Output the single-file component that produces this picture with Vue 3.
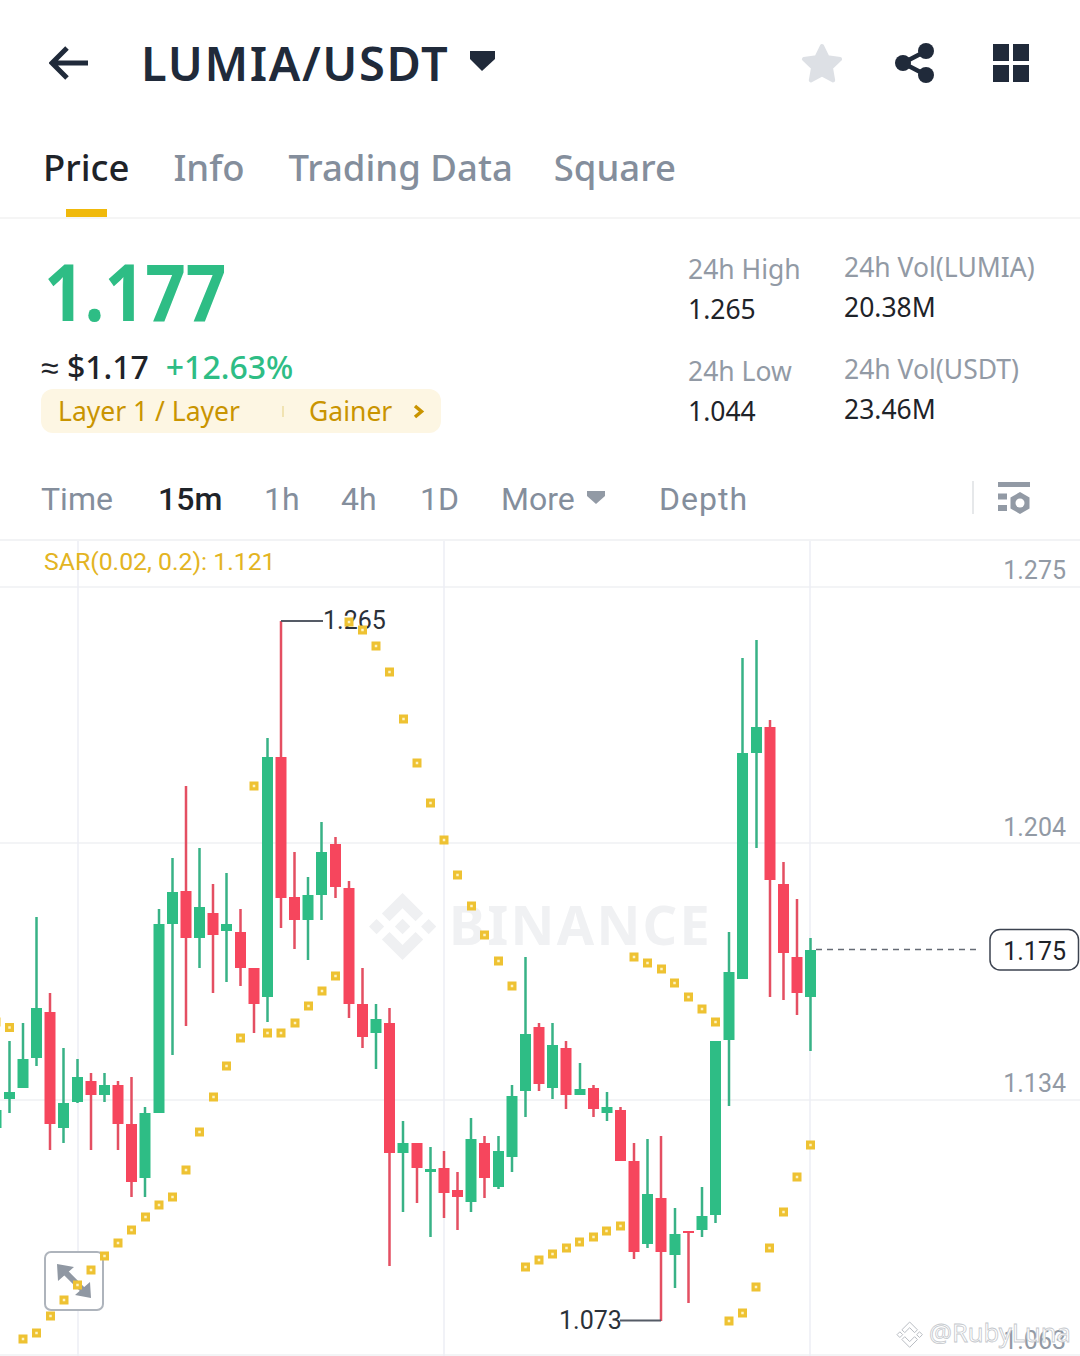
<template>
  <div class="screen">
    <header class="topbar">
      <svg class="back" width="44" height="36" viewBox="0 0 44 36">
        <path d="M18 3 L3 18 L18 33 M3 18 H39" fill="none" stroke="#202a3a" stroke-width="5" />
      </svg>
      <h1 class="pair">LUMIA/USDT</h1>
      <svg class="caret" width="26" height="20" viewBox="0 0 26 20">
        <path d="M1 0 H26 V8 L13 20 L1 8 Z" fill="#202a3a" />
      </svg>
      <svg class="star" width="42" height="42" viewBox="0 0 42 42">
        <polygon :points="starPoints" fill="#dde0e5" stroke="#dde0e5" stroke-width="4" stroke-linejoin="round" />
      </svg>
      <svg class="share" width="40" height="42" viewBox="0 0 40 42">
        <path d="M31 9 L8 21 L31 33" fill="none" stroke="#202a3a" stroke-width="4.5" />
        <circle cx="31" cy="9" r="8" fill="#202a3a" />
        <circle cx="8" cy="21" r="8" fill="#202a3a" />
        <circle cx="31" cy="33" r="8" fill="#202a3a" />
      </svg>
      <svg class="apps" width="37" height="38" viewBox="0 0 37 38">
        <rect x="0" y="0" width="16" height="17" fill="#202a3a" />
        <rect x="20" y="0" width="16" height="17" fill="#202a3a" />
        <rect x="0" y="21" width="16" height="17" fill="#202a3a" />
        <rect x="20" y="21" width="16" height="17" fill="#202a3a" />
      </svg>
    </header>

    <nav class="tabs">
      <span v-for="tab in tabs" :key="tab" :class="['tab', { active: tab === 'Price' }]">{{ tab }}</span>
    </nav>

    <section class="summary">
      <div class="left">
        <div class="last">1.177</div>
        <div class="change">
          <span class="approx">≈ $1.17</span>
          <span class="pct">+12.63%</span>
        </div>
        <div class="pill">
          <span>Layer 1 / Layer</span>
          <i class="pill-sep"></i>
          <span>Gainer</span>
          <svg width="12" height="15" viewBox="0 0 12 15">
            <path d="M2 2 L8.5 7.5 L2 13" fill="none" stroke="#c99400" stroke-width="3.5" />
          </svg>
        </div>
      </div>
      <div class="stats">
        <div class="stat-col first">
          <div class="stat"><label>24h High</label><b>1.265</b></div>
          <div class="stat"><label>24h Low</label><b>1.044</b></div>
        </div>
        <div class="stat-col">
          <div class="stat"><label>24h Vol(LUMIA)</label><b>20.38M</b></div>
          <div class="stat"><label>24h Vol(USDT)</label><b>23.46M</b></div>
        </div>
      </div>
    </section>

    <div class="intervals">
      <span v-for="iv in intervals" :key="iv.name" :class="['iv', { on: iv.name === '15m' }]" :style="{ width: iv.w + 'px' }">{{ iv.name }}</span>
      <svg class="more-caret" width="18" height="13" viewBox="0 0 18 13">
        <path d="M0 0 H18 V5 L9 13 L0 5 Z" fill="#929aa5" />
      </svg>
      <span class="iv depth">Depth</span>
      <i class="iv-sep"></i>
      <svg class="settings" width="32" height="33" viewBox="0 0 32 33">
        <rect x="0" y="1" width="32" height="5" fill="#929aa5" />
        <rect x="0" y="12.5" width="9" height="6" fill="#929aa5" />
        <rect x="0" y="24" width="9" height="6" fill="#929aa5" />
        <polygon points="22,11 31.5,16.5 31.5,27.5 22,33 12.5,27.5 12.5,16.5" fill="#929aa5" />
        <circle cx="22" cy="22" r="4.5" fill="#fff" />
      </svg>
    </div>

    <div class="chart">
      <svg width="1080" height="815" viewBox="0 541 1080 815">
        <line v-for="y in gridY" :key="'h' + y" x1="0" x2="1080" :y1="y" :y2="y" stroke="#eff0f3" stroke-width="1.5" />
        <line v-for="x in gridX" :key="'v' + x" :x1="x" :x2="x" y1="541" y2="1356" stroke="#eceef4" stroke-width="1.5" />

        <path transform="translate(369 893) scale(0.53)" fill="#eff0f2" d="M38.73 53.2l24.59-24.58 24.6 24.6 14.3-14.31L63.32 0 24.43 38.9zM0 63.31l14.3-14.31 14.31 14.31-14.31 14.3zM38.73 73.41l24.59 24.59 24.6-24.6 14.31 14.29-38.9 38.91-38.91-38.88-.02-.02zM98.28 63.31l14.3-14.31 14.31 14.3-14.31 14.32zM77.83 63.3L63.32 48.78 52.59 59.51l-1.24 1.23-2.54 2.54 14.51 14.5 14.51-14.47z" />
        <text class="mark" x="449" y="945">BINANCE</text>

        <text class="sar-label" x="44" y="569.5">SAR(0.02, 0.2): 1.121</text>
        <text v-for="p in axis" :key="p.text" class="axis" x="1066" :y="p.y" text-anchor="end">{{ p.text }}</text>

        <rect x="45" y="1252" width="58" height="58" rx="6" fill="#fff" stroke="#aeb4bc" stroke-width="2" />
        <path d="M57 1264 L74 1267 L58 1281 Z M91 1298 L75 1295 L90 1282 Z" fill="#9098a3" />
        <path d="M64 1271 L84 1291" stroke="#9098a3" stroke-width="6" />

        <g v-for="c in bars" :key="c.x">
          <rect :x="c.x - 1.25" :y="c.high" width="2.5" :height="c.low - c.high" :fill="c.up ? '#38b286' : '#e44f62'" />
          <rect :x="c.x - 5.5" :y="c.top" width="11" :height="c.bottom - c.top" :fill="c.up ? '#2ebd85' : '#f6465d'" />
        </g>

        <path d="M281 621 H323" stroke="#555b66" stroke-width="2" fill="none" />
        <path d="M620 1320.5 H661" stroke="#555b66" stroke-width="2" fill="none" />
        <text class="extreme" x="323" y="629">1.265</text>
        <text class="extreme" x="559" y="1329">1.073</text>

        <g v-for="d in sar" :key="d[0] + '-' + d[1]">
          <rect :x="d[0] - 4.5" :y="d[1] - 4.5" width="9" height="9" fill="#eec232" />
          <rect :x="d[0] - 1.25" :y="d[1] - 1.25" width="2.5" height="2.5" fill="#fdf3c4" />
        </g>

        <line x1="816" x2="976" y1="949.5" y2="949.5" stroke="#666b75" stroke-width="1.5" stroke-dasharray="6 5" />
        <rect x="990" y="929.5" width="88.5" height="40.5" rx="10" fill="#fff" stroke="#3c4350" stroke-width="1.5" />
        <text class="axis dark" x="1066" y="960" text-anchor="end">1.175</text>

        <path transform="translate(897 1322) scale(0.2)" fill="#fff" stroke="#b9bdc3" stroke-width="5" d="M38.73 53.2l24.59-24.58 24.6 24.6 14.3-14.31L63.32 0 24.43 38.9zM0 63.31l14.3-14.31 14.31 14.31-14.31 14.3zM38.73 73.41l24.59 24.59 24.6-24.6 14.31 14.29-38.9 38.91-38.91-38.88-.02-.02zM98.28 63.31l14.3-14.31 14.31 14.3-14.31 14.32z" />
        <text class="credit" x="929" y="1342">@RubyLuna</text>
      </svg>
    </div>
  </div>
</template>

<script setup>
import { computed } from 'vue'

const tabs = ['Price', 'Info', 'Trading Data', 'Square']

const intervals = [
  { name: 'Time', w: 117 },
  { name: '15m', w: 106 },
  { name: '1h', w: 77 },
  { name: '4h', w: 79 },
  { name: '1D', w: 81 },
  { name: 'More', w: 86 }
]

const gridY = [587, 843, 1100, 1355]
const gridX = [78, 444, 810]

const axis = [
  { text: '1.275', y: 579 },
  { text: '1.204', y: 836 },
  { text: '1.134', y: 1092 },
  { text: '1.063', y: 1349 }
]

// [up, high, bodyTop, bodyBottom, low], one entry per candle from the left edge
const candles = [
  [1, 1100, 1110, 1128, 1130],
  [1, 1041, 1092, 1099, 1113],
  [1, 1023, 1059, 1088, 1088],
  [1, 917, 1008, 1058, 1066],
  [0, 993, 1012, 1124, 1150],
  [1, 1048, 1103, 1128, 1143],
  [1, 1059, 1077, 1102, 1103],
  [0, 1073, 1081, 1095, 1150],
  [1, 1073, 1085, 1095, 1102],
  [0, 1081, 1085, 1124, 1150],
  [0, 1077, 1124, 1182, 1197],
  [1, 1107, 1113, 1178, 1197],
  [1, 909, 924, 1113, 1113],
  [1, 858, 892, 924, 1055],
  [0, 786, 891, 938, 1026],
  [1, 848, 907, 938, 968],
  [0, 884, 913, 935, 993],
  [1, 873, 924, 931, 982],
  [0, 909, 932, 968, 986],
  [0, 968, 968, 1004, 1033],
  [1, 738, 757, 997, 1022],
  [0, 621, 757, 898, 928],
  [0, 852, 897, 920, 949],
  [1, 877, 895, 920, 960],
  [1, 822, 852, 895, 920],
  [0, 837, 844, 887, 898],
  [0, 881, 888, 1004, 1018],
  [0, 968, 1004, 1037, 1048],
  [1, 1004, 1019, 1033, 1069],
  [0, 1008, 1023, 1153, 1266],
  [1, 1121, 1143, 1153, 1212],
  [0, 1143, 1143, 1168, 1203],
  [1, 1147, 1169, 1172, 1237],
  [0, 1151, 1168, 1193, 1218],
  [0, 1172, 1190, 1197, 1230],
  [1, 1118, 1139, 1202, 1212],
  [0, 1136, 1143, 1178, 1198],
  [1, 1136, 1151, 1187, 1189],
  [1, 1085, 1096, 1157, 1172],
  [1, 957, 1034, 1091, 1117],
  [0, 1023, 1027, 1084, 1091],
  [1, 1023, 1045, 1088, 1099],
  [0, 1041, 1048, 1095, 1109],
  [1, 1063, 1089, 1095, 1095],
  [0, 1085, 1088, 1109, 1117],
  [1, 1092, 1107, 1113, 1121],
  [0, 1107, 1110, 1161, 1161],
  [0, 1143, 1161, 1252, 1259],
  [1, 1139, 1194, 1244, 1248],
  [0, 1136, 1198, 1252, 1321],
  [1, 1208, 1234, 1255, 1288],
  [0, 1231, 1231, 1233, 1303],
  [1, 1187, 1216, 1230, 1237],
  [1, 1041, 1041, 1215, 1223],
  [1, 932, 972, 1040, 1106],
  [1, 658, 753, 979, 979],
  [1, 640, 727, 753, 848],
  [0, 720, 727, 880, 997],
  [0, 862, 884, 953, 1000],
  [0, 899, 957, 993, 1015],
  [1, 938, 950, 997, 1051]
]

const bars = computed(() =>
  candles.map((c, i) => ({
    x: Math.round((9.4 + 13.58 * (i - 1)) * 2) / 2,
    up: c[0] === 1,
    high: c[1],
    top: c[2],
    bottom: c[3],
    low: c[4]
  }))
)

const sar = [
  [-4, 1022], [9.5, 1027.5], [23, 1339], [36.5, 1333], [50.5, 1316], [64, 1300], [77.5, 1285],
  [91, 1270], [104.5, 1256], [118, 1243], [131.5, 1230], [145.5, 1217], [159, 1205], [172.5, 1197],
  [186, 1170], [199.5, 1132], [213.5, 1097], [226.5, 1066], [240.5, 1038], [254, 786],
  [267.5, 1033], [281, 1033], [295, 1023], [308.5, 1006], [322, 991], [335.5, 976],
  [349, 622], [362.5, 630], [376, 646], [389.5, 672], [403.5, 719], [417, 763], [430.5, 803],
  [444, 840], [457.5, 875], [471.5, 906], [484.5, 935], [498.5, 961], [512, 986],
  [525.5, 1267], [539, 1260], [552.5, 1254], [566.5, 1248], [579.5, 1242], [593.5, 1237],
  [606.5, 1231], [620.5, 1226], [634, 957], [647.5, 963], [661.5, 969], [674.5, 983],
  [688.5, 997], [702, 1009], [715.5, 1022], [729, 1321], [742.5, 1313], [756, 1287],
  [769.5, 1248], [783.5, 1212], [797, 1177], [810.5, 1145]
]

const starPoints = computed(() => {
  const pts = []
  for (let i = 0; i < 10; i++) {
    const r = i % 2 === 0 ? 19 : 9.5
    const a = -Math.PI / 2 + (i * Math.PI) / 5
    pts.push((21 + r * Math.cos(a)).toFixed(1) + ',' + (23 + r * Math.sin(a)).toFixed(1))
  }
  return pts.join(' ')
})
</script>

<style scoped>
.screen {
  width: 1080px;
  height: 1356px;
  overflow: hidden;
  background: #fff;
  font-family: "Noto Sans", "Liberation Sans", sans-serif;
  color: #1e2329;
}

.topbar {
  height: 126px;
  display: flex;
  align-items: center;
  padding-left: 47px;
}

.back {
  margin-left: 2px;
}

.pair {
  margin: 0 0 0 48px;
  font-size: 47px;
  font-weight: 600;
  letter-spacing: 1.6px;
  color: #202a3a;
  line-height: 1;
}

.caret {
  margin: -4px 0 0 20px;
}

.star {
  margin-left: auto;
}

.share {
  margin-left: 52px;
}

.apps {
  margin: 0 50px 0 58px;
}

.tabs {
  height: 93px;
  display: flex;
  gap: 44px;
  padding-left: 43px;
  box-sizing: border-box;
  border-bottom: 2px solid #f5f5f5;
}

.tab {
  position: relative;
  font-size: 36.5px;
  line-height: 83px;
  color: #848e9c;
  font-weight: 500;
}

.tab:last-child {
  margin-left: -3px;
}

.tab.active {
  color: #1e2329;
}

.tab.active::after {
  content: "";
  position: absolute;
  left: 23px;
  bottom: 0;
  width: 41px;
  height: 8px;
  background: #f0b90b;
}

.summary {
  height: 234px;
  display: flex;
  justify-content: space-between;
  padding-left: 41px;
}

.last {
  margin: 32px 0 0 3px;
  font-size: 78px;
  line-height: 80px;
  font-weight: 700;
  color: #2ebd85;
  transform: scaleX(0.91);
  transform-origin: left center;
}

.change {
  display: flex;
  align-items: baseline;
  gap: 17px;
  margin-top: 14px;
  line-height: 44px;
}

.approx {
  font-size: 32px;
  font-weight: 500;
}

.pct {
  font-size: 32px;
  font-weight: 500;
  color: #2ebd85;
}

.pill {
  width: 400px;
  height: 44px;
  display: flex;
  align-items: center;
  box-sizing: border-box;
  padding-left: 17px;
  background: #fdf6e3;
  border-radius: 12px;
  color: #c99400;
  font-size: 26.5px;
}

.pill-sep {
  width: 2px;
  height: 11px;
  margin: 0 25px 0 42px;
  background: #f1e3b2;
}

.pill svg {
  margin-left: 21px;
}

.stats {
  display: flex;
  font-size: 26.5px;
}

.stat-col {
  width: 236px;
  padding-top: 29px;
}

.stat-col.first {
  width: 156px;
  padding-top: 31px;
}

.stat {
  height: 102px;
}

.stat label {
  display: block;
  line-height: 38px;
  color: #929aa5;
}

.stat b {
  display: block;
  font-weight: 400;
  line-height: 42px;
  color: #1e2329;
}

.intervals {
  height: 88px;
  display: flex;
  align-items: center;
  box-sizing: border-box;
  padding: 6px 0 0 41px;
  border-bottom: 2px solid #f2f3f5;
  font-family: Roboto, "Noto Sans", sans-serif;
  font-size: 32px;
  color: #848e9c;
}

.iv.on {
  color: #1e2329;
  font-weight: 500;
}

.more-caret {
  margin: -4px 0 0 0;
}

.depth {
  margin-left: 54px;
  letter-spacing: 1px;
}

.iv-sep {
  width: 2px;
  height: 33px;
  margin: -4px 0 0 auto;
  background: #e6e8ea;
}

.settings {
  margin: -4px 50px 0 24px;
}

.chart {
  height: 815px;
}

.chart svg {
  display: block;
}

.mark {
  font-family: "Noto Sans", sans-serif;
  font-size: 54px;
  font-weight: 700;
  letter-spacing: 2.3px;
  fill: #f0f1f3;
}

.sar-label {
  font-family: Roboto, sans-serif;
  font-size: 24.8px;
  fill: #e3b422;
}

.axis {
  font-family: Roboto, sans-serif;
  font-size: 25px;
  fill: #929aa5;
}

.axis.dark {
  fill: #1e2329;
}

.extreme {
  font-family: Roboto, sans-serif;
  font-size: 25px;
  fill: #2b3139;
}

.credit {
  font-family: "Noto Sans", sans-serif;
  font-size: 25.5px;
  fill: #fff;
  stroke: #c4c7cc;
  stroke-width: 0.8;
}
</style>

<style>
html,
body {
  margin: 0;
  background: #fff;
}
</style>
